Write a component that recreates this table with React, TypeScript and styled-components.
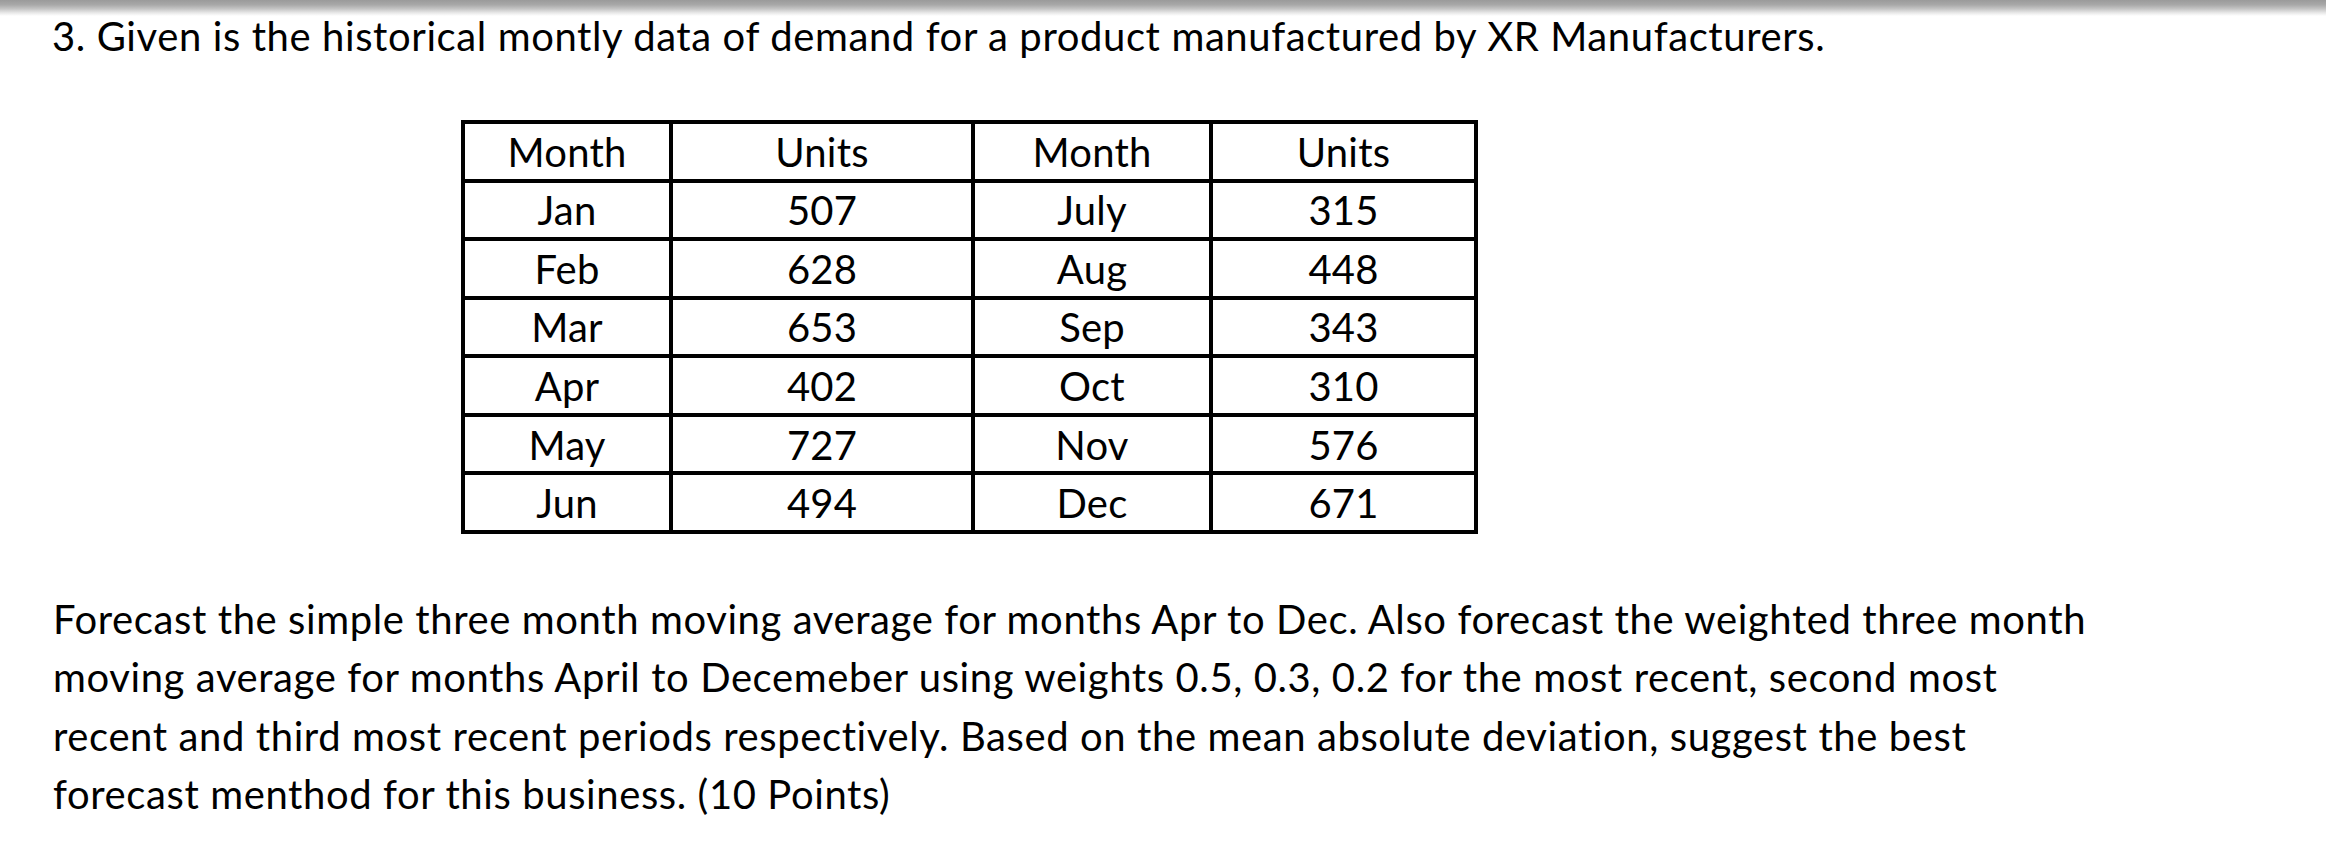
import React from "react";
import styled, { createGlobalStyle } from "styled-components";

const GlobalStyle = createGlobalStyle`
  html, body {
    margin: 0;
    padding: 0;
    background: #ffffff;
  }
  body {
    font-family: "Lato", "Liberation Sans", sans-serif;
    color: #000000;
  }
`;

const Page = styled.div`
  width: 2326px;
  height: 846px;
  display: flex;
  flex-direction: column;
  background: #ffffff;
  overflow: hidden;
`;

const TopShade = styled.div`
  height: 16px;
  flex: none;
  background: linear-gradient(to bottom, #9a9a9a 0%, #a8a8a8 30%, #c4c4c4 55%, #e8e8e8 80%, #ffffff 100%);
`;

const Title = styled.h1`
  margin: 0;
  padding-left: 52px;
  font-family: "Lato", "Liberation Sans", sans-serif;
  font-weight: 400;
  font-size: 40px;
  line-height: 40px;
  letter-spacing: 0.6px;
  white-space: nowrap;
`;

const TableWrap = styled.div`
  margin-top: 64px;
  padding-left: 461px;
  display: flex;
`;

const DataGrid = styled.div`
  display: grid;
  grid-template-columns: 204px 298px 234px 261px;
  grid-auto-rows: 54.57px;
  gap: 4px;
  padding: 4px;
  background: #000000;
`;

const Cell = styled.div`
  background: #ffffff;
  display: flex;
  align-items: center;
  justify-content: center;
  font-family: "Lato", "Liberation Sans", sans-serif;
  font-size: 40px;
  line-height: 48px;
  letter-spacing: 0.2px;
  padding-top: 1px;
`;

const Question = styled.p`
  margin: 56px 0 0 0;
  padding-left: 53px;
  font-family: "Lato", "Liberation Sans", sans-serif;
  font-size: 40px;
  line-height: 58.3px;
  letter-spacing: 0.6px;
`;

const Line = styled.span`
  display: block;
  white-space: nowrap;
`;

const rows: [string, string, string, string][] = [
  ["Month", "Units", "Month", "Units"],
  ["Jan", "507", "July", "315"],
  ["Feb", "628", "Aug", "448"],
  ["Mar", "653", "Sep", "343"],
  ["Apr", "402", "Oct", "310"],
  ["May", "727", "Nov", "576"],
  ["Jun", "494", "Dec", "671"],
];

const questionLines = [
  "Forecast the simple three month moving average for months Apr to Dec. Also forecast the weighted three month",
  "moving average for months April to Decemeber using weights 0.5, 0.3, 0.2 for the most recent, second most",
  "recent and third most recent periods respectively. Based on the mean absolute deviation, suggest the best",
  "forecast menthod for this business. (10 Points)",
];

export default function App() {
  return (
    <Page>
      <GlobalStyle />
      <TopShade />
      <Title>3. Given is the historical montly data of demand for a product manufactured by XR Manufacturers.</Title>
      <TableWrap>
        <DataGrid>
          {rows.map((r, i) =>
            r.map((c, j) => <Cell key={`${i}-${j}`}>{c}</Cell>)
          )}
        </DataGrid>
      </TableWrap>
      <Question>
        {questionLines.map((l) => (
          <Line key={l}>{l}</Line>
        ))}
      </Question>
    </Page>
  );
}
